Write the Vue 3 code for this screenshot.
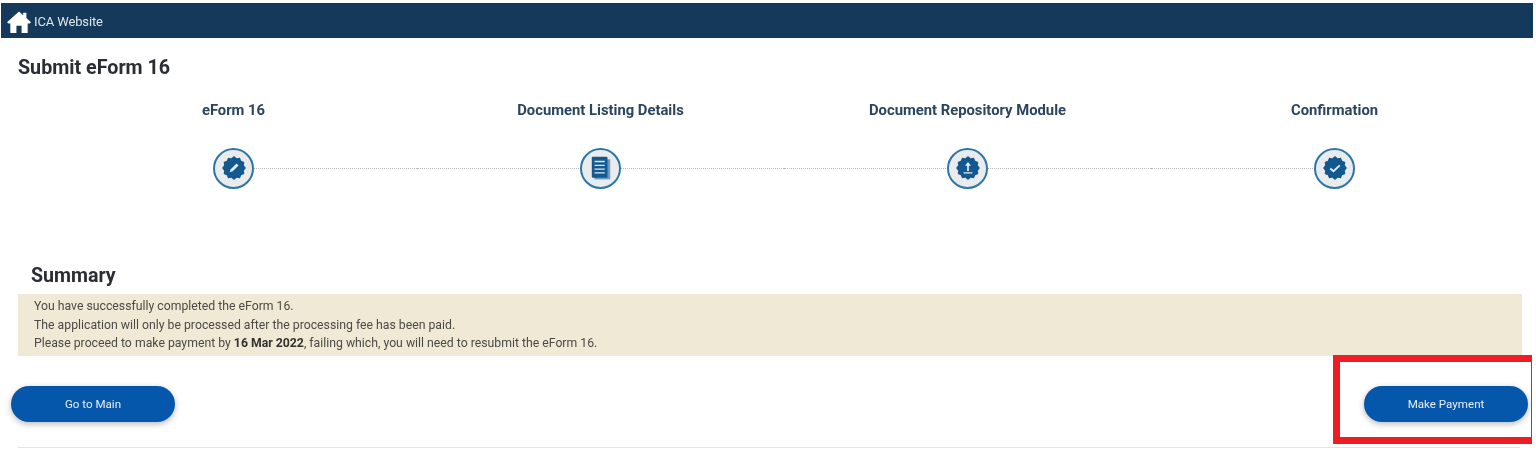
<script setup>
const badge = (() => {
  const pts = []
  const n = 12
  for (let i = 0; i < n * 2; i++) {
    const r = i % 2 ? 9.4 : 11
    const a = (Math.PI * i) / n
    pts.push(`${(12 + r * Math.sin(a)).toFixed(2)},${(12 - r * Math.cos(a)).toFixed(2)}`)
  }
  return pts.join(' ')
})()

const steps = [
  { label: 'eForm 16', icon: 'edit' },
  { label: 'Document Listing Details', icon: 'doc' },
  { label: 'Document Repository Module', icon: 'upload' },
  { label: 'Confirmation', icon: 'check' },
]
</script>

<template>
  <div class="page">
    <header class="nav">
      <svg class="home" viewBox="0 0 26 24" aria-hidden="true">
        <path d="M13 0.5 L17.5 4.6 V2 H21 V7.8 L26 12.4 L24.4 13.6 H22.4 V24 H15.8 V16 H10.2 V24 H3.6 V13.6 H1.6 L0 12.4 Z" fill="#fff" />
      </svg>
      <span class="brand">ICA Website</span>
    </header>

    <h1 class="title">Submit eForm 16</h1>

    <section class="stepper">
      <div v-for="(s, i) in steps" :key="s.label" class="step">
        <div class="label">{{ s.label }}</div>
        <div class="track">
          <span v-if="i > 0" class="line left"></span>
          <span v-if="i < steps.length - 1" class="line right"></span>
          <span class="dot">
            <svg viewBox="0 0 24 24" class="glyph" aria-hidden="true">
              <template v-if="s.icon === 'doc'">
                <path d="M6 4 H20.5 V22.5 H6 Z" fill="#6d9abd" />
                <rect x="3.5" y="1.5" width="14.5" height="19.5" rx="1" fill="#13598f" />
                <path d="M6 6 H15.5 M6 9.5 H15.5 M6 13 H15.5 M6 16.5 H15.5" stroke="#dfe8ef" stroke-width="1.2" />
              </template>
              <template v-else>
                <polygon :points="badge" fill="#13598f" />
                <template v-if="s.icon === 'edit'">
                  <path d="M8 16 L9 13.2 L14.4 7.8 L16.2 9.6 L10.8 15 Z" fill="#e6edf2" />
                </template>
                <template v-else-if="s.icon === 'upload'">
                  <path d="M12 6.5 L14.8 10 H12.8 V14.8 H11.2 V10 H9.2 Z M8 16 H16 V17 H8 Z" fill="#e6edf2" />
                </template>
                <template v-else>
                  <path d="M7.6 12.4 L10.6 15 L16.4 9.6" fill="none" stroke="#e6edf2" stroke-width="1.7" />
                </template>
              </template>
            </svg>
          </span>
        </div>
      </div>
    </section>

    <section class="summary">
      <h2 class="summary-title">Summary</h2>
      <div class="notice">
        <p>You have successfully completed the eForm 16.</p>
        <p>The application will only be processed after the processing fee has been paid.</p>
        <p>Please proceed to make payment by <b>16 Mar 2022</b>, failing which, you will need to resubmit the eForm 16.</p>
      </div>
    </section>

    <div class="actions">
      <button class="btn" type="button">Go to Main</button>
      <button class="btn" type="button">Make Payment</button>
    </div>
    <div class="rule"></div>

    <div class="highlight"></div>
  </div>
</template>

<style>
html, body { margin: 0; background: #fff; }
</style>

<style scoped>
.page {
  position: relative;
  width: 1536px;
  height: 451px;
  overflow: hidden;
  box-sizing: border-box;
  padding-top: 3px;
  background: #fff;
  font-family: Roboto, "Liberation Sans", sans-serif;
  filter: blur(0.6px);
}
.nav {
  display: flex;
  align-items: center;
  gap: 3px;
  height: 35px;
  margin: 0 3px 0 1px;
  padding-left: 6px;
  background: #14395a;
}
.home { width: 24px; height: 24px; margin-top: 3px; }
.brand { color: #dfe6ec; font-size: 13px; margin-top: 1px; letter-spacing: -0.01em; }
.title {
  margin: 19px 0 0 18px;
  font-size: 19.7px;
  line-height: 22px;
  font-weight: 700;
  color: #2a2d35;
}
.stepper {
  display: grid;
  grid-template-columns: repeat(4, 367px);
  margin: 21px 0 0 50px;
}
.step { display: flex; flex-direction: column; align-items: center; }
.label {
  height: 20px;
  font-size: 14.8px;
  line-height: 20px;
  font-weight: 700;
  color: #2b4560;
}
.track {
  position: relative;
  align-self: stretch;
  display: flex;
  justify-content: center;
  margin-top: 27px;
  height: 42px;
}
.line {
  position: absolute;
  top: 21px;
  width: 50%;
  border-top: 1px dotted #b4b8bb;
}
.line.left { left: 0; }
.line.right { right: 0; }
.dot {
  position: relative;
  box-sizing: border-box;
  display: flex;
  align-items: center;
  justify-content: center;
  width: 41px;
  height: 41px;
  margin-top: 0.5px;
  border-radius: 50%;
  border: 2.5px solid #2b77a8;
  background: #e9ebec;
}
.glyph { width: 26px; height: 26px; }
.summary { margin-top: 75px; }
.summary-title {
  margin: 0 0 6px 31px;
  font-size: 19.6px;
  line-height: 24px;
  font-weight: 700;
  color: #2a2d35;
}
.notice {
  box-sizing: border-box;
  height: 62px;
  margin: 0 14px 0 18px;
  padding: 3px 16px;
  background: #f0e9d6;
  color: #4b4a45;
  font-size: 12.26px;
  line-height: 18.5px;
}
.notice p { margin: 0; }
.notice b { color: #33322e; font-weight: 700; }
.actions {
  display: flex;
  justify-content: space-between;
  margin: 30px 8px 0 11px;
}
.btn {
  width: 164px;
  height: 36px;
  padding: 0;
  border: 0;
  border-radius: 18px;
  background: #0557ab;
  color: #e6eef7;
  font-family: inherit;
  font-size: 11.6px;
  box-shadow: 0 2px 6px rgba(0, 0, 0, 0.28);
}
.rule {
  height: 1px;
  margin: 25px 16px 0 18px;
  background: #e4e5e6;
}
.highlight {
  position: absolute;
  left: 1333px;
  top: 355px;
  width: 199px;
  height: 89px;
  box-sizing: border-box;
  border: 7px solid #ee1c25;
  border-right-width: 1px;
}
</style>
